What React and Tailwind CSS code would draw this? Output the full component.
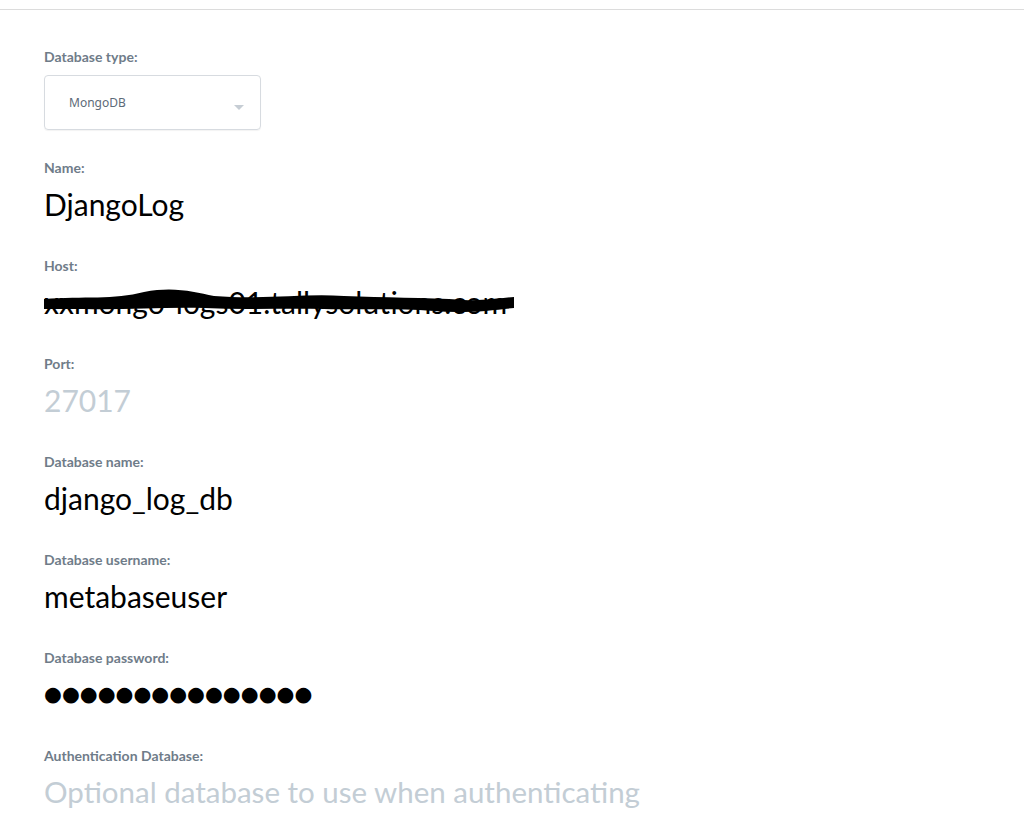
import React from "react";

const Label = ({ children }) => (
  <div className="text-[14px] font-bold leading-4 text-[#6f7c89]">{children}</div>
);

const Value = ({ children, muted, size = "text-[30px]" }) => (
  <div className={`mt-[10px] h-9 ${size} leading-9 ${muted ? "text-[#c3cdd5]" : "text-black"}`}>{children}</div>
);

export default function App() {
  return (
    <div className="min-h-[822px] w-[1024px] overflow-hidden bg-white" style={{ fontFamily: "Lato, 'Open Sans', sans-serif" }}>
      <div className="h-[10px] border-b border-[#dcdcdc]" />
      <div className="pl-[44px] pt-[39px]">
        <Label>Database type:</Label>
        <div className="mt-[10px] flex h-[55px] w-[217px] items-center justify-between rounded-[4px] border border-[#d7dbe0] pl-[24px] pr-[16px] shadow-[0_1px_1px_rgba(0,0,0,0.05)]">
          <span className="text-[12px] text-[#5d6a78]" style={{ fontFamily: "'Noto Sans', 'DejaVu Sans', sans-serif" }}>MongoDB</span>
          <svg width="10" height="6" viewBox="0 0 10 6" className="mt-[10px]">
            <path d="M0 0 L10 0 L5 5 Z" fill="#c6cdd4" />
          </svg>
        </div>

        <div className="mt-[30px]">
          <Label>Name:</Label>
          <Value>DjangoLog</Value>
        </div>

        <div className="mt-[36px]">
          <Label>Host:</Label>
          <div className="relative mt-[10px] h-9 w-[470px] whitespace-nowrap text-[30px] leading-9 text-black">
            <span>xxmongo-logs01.tallysolutions.com</span>
            <svg className="absolute left-0 top-0" width="470" height="36" viewBox="0 0 470 36">
              <path
                d="M0 15 C40 12 70 16 100 8 C130 2 150 8 170 12 C220 16 260 9 300 12 C340 14 380 13 420 16 C440 17 455 14 470 13 L470 24 C450 26 420 30 390 27 C350 24 320 26 280 25 C240 24 200 26 160 24 C120 23 80 26 40 25 C20 25 8 25 0 25 Z"
                fill="#000"
              />
            </svg>
          </div>
        </div>

        <div className="mt-[36px]">
          <Label>Port:</Label>
          <Value muted>27017</Value>
        </div>

        <div className="mt-[36px]">
          <Label>Database name:</Label>
          <Value>django_log_db</Value>
        </div>

        <div className="mt-[36px]">
          <Label>Database username:</Label>
          <Value>metabaseuser</Value>
        </div>

        <div className="mt-[36px]">
          <Label>Database password:</Label>
          <div className="mt-[10px] flex h-9 items-center text-black" style={{ fontFamily: "'DejaVu Sans', sans-serif" }}>
            <span className="block text-[20.5px] leading-9">●●●●●●●●●●●●●●●</span>
          </div>
        </div>

        <div className="mt-[36px]">
          <Label>Authentication Database:</Label>
          <Value muted size="text-[29.5px]">Optional database to use when authenticating</Value>
        </div>
      </div>
    </div>
  );
}
